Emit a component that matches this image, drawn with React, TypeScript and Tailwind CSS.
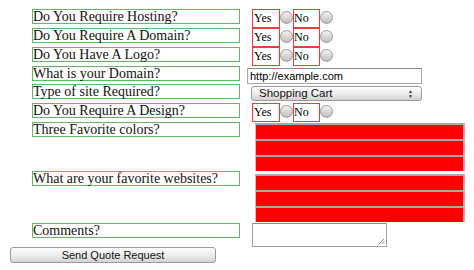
const serif = "font-['Liberation_Serif','Times_New_Roman',serif]";
const sans = "font-['Liberation_Sans',Arial,sans-serif]";

function Label({ text }: { text: string }) {
  return (
    <div
      className={`w-[208px] h-[15px] shrink-0 border border-[#62b865] text-[14px] leading-[14px] text-[#111] whitespace-nowrap overflow-visible ${serif}`}
    >
      {text}
    </div>
  );
}

function Radio() {
  return (
    <span className="mt-[2px] block h-[13px] w-[13px] shrink-0 rounded-full border border-[#9a9a9a] bg-gradient-to-b from-[#f4f4f4] to-[#bdbdbd]" />
  );
}

function YesNo() {
  return (
    <div className="ml-[12px] flex items-start">
      <div className={`h-[19px] w-[28px] border border-[#ee3b3b] pl-[1px] text-[12px] leading-[16px] text-black ${serif}`}>Yes</div>
      <Radio />
      <div className={`h-[19px] w-[27px] border border-[#ee3b3b] text-[12px] leading-[16px] text-black ${serif}`}>No</div>
      <Radio />
    </div>
  );
}

function RedInputs() {
  return (
    <div className="ml-[15px] flex w-[210px] flex-col">
      {[0, 1, 2].map((i) => (
        <div
          key={i}
          className="h-[16px] border-t-2 border-l border-r-2 border-t-[#a9a9a9] border-l-[#f1b0b0] border-r-[#f3a3a3] bg-[#ff0000]"
        />
      ))}
    </div>
  );
}

export default function App() {
  return (
    <div className="h-[270px] w-[474px] overflow-hidden bg-white pt-[9px]">
      <div className="pl-[32px]">
        <div className="flex h-[19px] items-start">
          <Label text="Do You Require Hosting?" />
          <YesNo />
        </div>
        <div className="flex h-[19px] items-start">
          <Label text="Do You Require A Domain?" />
          <YesNo />
        </div>
        <div className="flex h-[19px] items-start">
          <Label text="Do You Have A Logo?" />
          <YesNo />
        </div>
        <div className="flex h-[18px] items-start">
          <Label text="What is your Domain?" />
          <div
            className={`ml-[7px] mt-[2px] h-[16px] w-[175px] border border-[#a8a8a8] border-t-[#8c8c8c] bg-white pl-[2px] text-[11px] leading-[14px] text-black ${sans}`}
          >
            http://example.com
          </div>
        </div>
        <div className="flex h-[19px] items-start">
          <Label text="Type of site Required?" />
          <div
            className={`ml-[11px] mt-[2px] flex h-[15px] w-[171px] items-center justify-between rounded-[3px] border border-[#9c9c9c] bg-gradient-to-b from-[#ffffff] via-[#ececec] to-[#d2d2d2] pl-[7px] pr-[8px] text-[11.5px] text-[#111] ${sans}`}
          >
            <span className="leading-[13px]">Shopping Cart</span>
            <span className="flex flex-col items-center leading-none text-[#333]">
              <span className="text-[5px]">▲</span>
              <span className="text-[5px]">▼</span>
            </span>
          </div>
        </div>
        <div className="flex h-[19px] items-start">
          <Label text="Do You Require A Design?" />
          <YesNo />
        </div>
        <div className="flex h-[49px] items-start">
          <Label text="Three Favorite colors?" />
          <div className="mt-[1px]">
            <RedInputs />
          </div>
        </div>
        <div className="flex h-[52px] items-start">
          <Label text="What are your favorite websites?" />
          <div className="mt-[3px]">
            <RedInputs />
          </div>
        </div>
        <div className="flex h-[24px] items-start">
          <Label text="Comments?" />
          <div className="relative ml-[12px] h-[24px] w-[135px] border border-[#a0a0a0] border-t-[#8a8a8a] bg-white">
            <svg className="absolute bottom-[1px] right-[1px]" width="7" height="7" viewBox="0 0 7 7">
              <path d="M6 1 L1 6 M6 3.5 L3.5 6 M6 5.5 L5.5 6" stroke="#888" strokeWidth="1" />
            </svg>
          </div>
        </div>
      </div>
      <div className="pl-[10px]">
        <button
          className={`flex h-[16px] w-[206px] items-center justify-center rounded-[3px] border border-[#9a9a9a] bg-gradient-to-b from-[#fdfdfd] via-[#eeeeee] to-[#d4d4d4] text-[11px] leading-[13px] text-[#111] ${sans}`}
        >
          Send Quote Request
        </button>
      </div>
    </div>
  );
}
